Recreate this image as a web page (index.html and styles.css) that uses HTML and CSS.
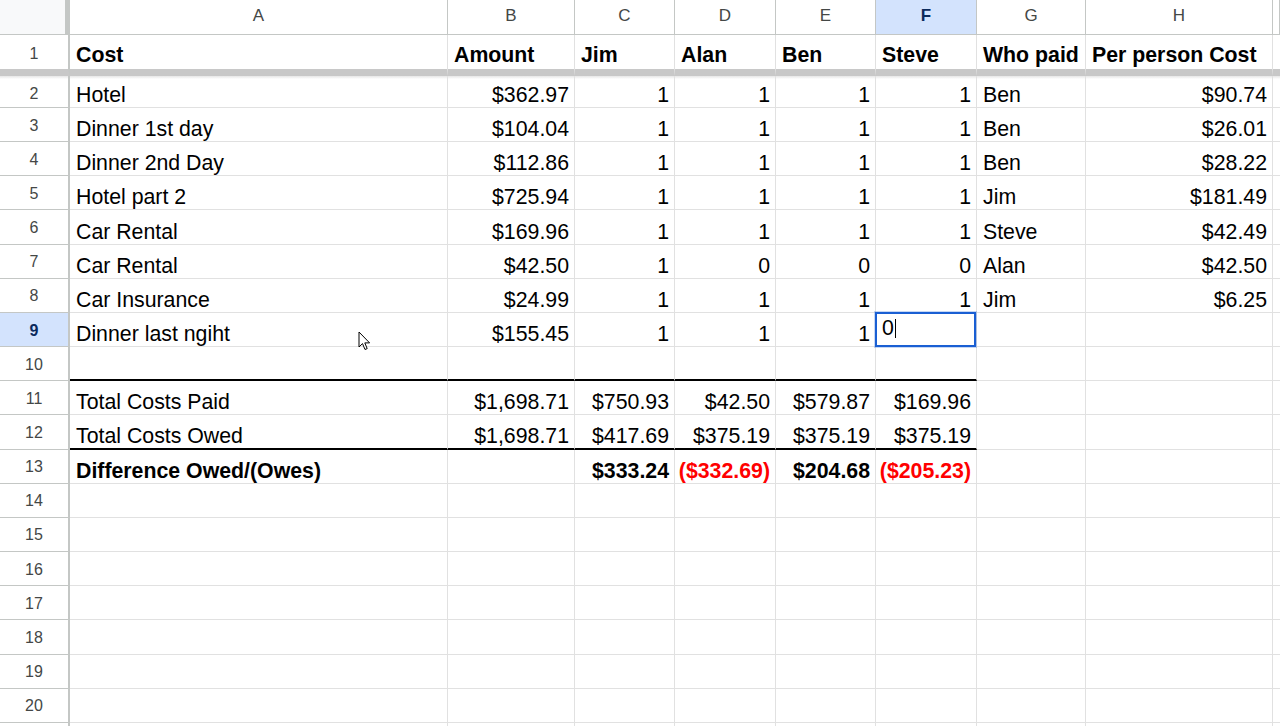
FILE: index.html
```html
<!DOCTYPE html>
<html>
<head>
<meta charset="utf-8">
<link rel="stylesheet" href="styles.css">
</head>
<body>
<div class="sheet">
  <div class="row colhead">
    <div class="corner"></div>
    <div class="ch">A</div><div class="ch">B</div><div class="ch">C</div><div class="ch">D</div><div class="ch">E</div><div class="ch sel">F</div><div class="ch">G</div><div class="ch">H</div><div class="ch"></div>
  </div>
  <div class="row frozen">
    <div class="rh">1</div>
    <div class="c b">Cost</div><div class="c b">Amount</div><div class="c b">Jim</div><div class="c b">Alan</div><div class="c b">Ben</div><div class="c b">Steve</div><div class="c b">Who paid</div><div class="c b">Per person Cost</div><div class="c"></div>
  </div>
  <div class="row first">
    <div class="rh">2</div>
    <div class="c">Hotel</div><div class="c r">$362.97</div><div class="c r">1</div><div class="c r">1</div><div class="c r">1</div><div class="c r">1</div><div class="c">Ben</div><div class="c r">$90.74</div><div class="c"></div>
  </div>
  <div class="row">
    <div class="rh">3</div>
    <div class="c">Dinner 1st day</div><div class="c r">$104.04</div><div class="c r">1</div><div class="c r">1</div><div class="c r">1</div><div class="c r">1</div><div class="c">Ben</div><div class="c r">$26.01</div><div class="c"></div>
  </div>
  <div class="row">
    <div class="rh">4</div>
    <div class="c">Dinner 2nd Day</div><div class="c r">$112.86</div><div class="c r">1</div><div class="c r">1</div><div class="c r">1</div><div class="c r">1</div><div class="c">Ben</div><div class="c r">$28.22</div><div class="c"></div>
  </div>
  <div class="row">
    <div class="rh">5</div>
    <div class="c">Hotel part 2</div><div class="c r">$725.94</div><div class="c r">1</div><div class="c r">1</div><div class="c r">1</div><div class="c r">1</div><div class="c">Jim</div><div class="c r">$181.49</div><div class="c"></div>
  </div>
  <div class="row">
    <div class="rh">6</div>
    <div class="c">Car Rental</div><div class="c r">$169.96</div><div class="c r">1</div><div class="c r">1</div><div class="c r">1</div><div class="c r">1</div><div class="c">Steve</div><div class="c r">$42.49</div><div class="c"></div>
  </div>
  <div class="row">
    <div class="rh">7</div>
    <div class="c">Car Rental</div><div class="c r">$42.50</div><div class="c r">1</div><div class="c r">0</div><div class="c r">0</div><div class="c r">0</div><div class="c">Alan</div><div class="c r">$42.50</div><div class="c"></div>
  </div>
  <div class="row">
    <div class="rh">8</div>
    <div class="c">Car Insurance</div><div class="c r">$24.99</div><div class="c r">1</div><div class="c r">1</div><div class="c r">1</div><div class="c r">1</div><div class="c">Jim</div><div class="c r">$6.25</div><div class="c"></div>
  </div>
  <div class="row">
    <div class="rh sel">9</div>
    <div class="c">Dinner last ngiht</div><div class="c r">$155.45</div><div class="c r">1</div><div class="c r">1</div><div class="c r">1</div><div class="c editing"><span class="edit-text">0</span><span class="caret"></span></div><div class="c"></div><div class="c"></div><div class="c"></div>
  </div>
  <div class="row">
    <div class="rh">10</div>
    <div class="c rule"></div><div class="c rule"></div><div class="c rule"></div><div class="c rule"></div><div class="c rule"></div><div class="c rule"></div><div class="c"></div><div class="c"></div><div class="c"></div>
  </div>
  <div class="row">
    <div class="rh">11</div>
    <div class="c">Total Costs Paid</div><div class="c r">$1,698.71</div><div class="c r">$750.93</div><div class="c r">$42.50</div><div class="c r">$579.87</div><div class="c r">$169.96</div><div class="c"></div><div class="c"></div><div class="c"></div>
  </div>
  <div class="row">
    <div class="rh">12</div>
    <div class="c rule">Total Costs Owed</div><div class="c r rule">$1,698.71</div><div class="c r rule">$417.69</div><div class="c r rule">$375.19</div><div class="c r rule">$375.19</div><div class="c r rule">$375.19</div><div class="c"></div><div class="c"></div><div class="c"></div>
  </div>
  <div class="row">
    <div class="rh">13</div>
    <div class="c b">Difference Owed/(Owes)</div><div class="c"></div><div class="c r b">$333.24</div><div class="c r b neg">($332.69)</div><div class="c r b">$204.68</div><div class="c r b neg">($205.23)</div><div class="c"></div><div class="c"></div><div class="c"></div>
  </div>
  <div class="row"><div class="rh">14</div><div class="c"></div><div class="c"></div><div class="c"></div><div class="c"></div><div class="c"></div><div class="c"></div><div class="c"></div><div class="c"></div><div class="c"></div></div>
  <div class="row"><div class="rh">15</div><div class="c"></div><div class="c"></div><div class="c"></div><div class="c"></div><div class="c"></div><div class="c"></div><div class="c"></div><div class="c"></div><div class="c"></div></div>
  <div class="row"><div class="rh">16</div><div class="c"></div><div class="c"></div><div class="c"></div><div class="c"></div><div class="c"></div><div class="c"></div><div class="c"></div><div class="c"></div><div class="c"></div></div>
  <div class="row"><div class="rh">17</div><div class="c"></div><div class="c"></div><div class="c"></div><div class="c"></div><div class="c"></div><div class="c"></div><div class="c"></div><div class="c"></div><div class="c"></div></div>
  <div class="row"><div class="rh">18</div><div class="c"></div><div class="c"></div><div class="c"></div><div class="c"></div><div class="c"></div><div class="c"></div><div class="c"></div><div class="c"></div><div class="c"></div></div>
  <div class="row"><div class="rh">19</div><div class="c"></div><div class="c"></div><div class="c"></div><div class="c"></div><div class="c"></div><div class="c"></div><div class="c"></div><div class="c"></div><div class="c"></div></div>
  <div class="row"><div class="rh">20</div><div class="c"></div><div class="c"></div><div class="c"></div><div class="c"></div><div class="c"></div><div class="c"></div><div class="c"></div><div class="c"></div><div class="c"></div></div>
  <div class="row tail"><div class="rh"></div><div class="c"></div><div class="c"></div><div class="c"></div><div class="c"></div><div class="c"></div><div class="c"></div><div class="c"></div><div class="c"></div><div class="c"></div></div>
</div>
<svg class="cursor" width="14" height="21" viewBox="0 0 14 21" xmlns="http://www.w3.org/2000/svg">
  <path d="M1 1 L1 16 L4.5 12.6 L7 18.5 L9.2 17.6 L6.8 11.9 L11.6 11.9 Z" fill="#fff" stroke="#000" stroke-width="1" stroke-linejoin="round"/>
</svg>
</body>
</html>
```
FILE: styles.css
```css
* { box-sizing: border-box; }
html, body { margin: 0; padding: 0; background: #fff; }
body {
  width: 1280px;
  height: 726px;
  overflow: hidden;
  position: relative;
  font-family: "Liberation Sans", Arial, sans-serif;
}
.sheet { display: flex; flex-direction: column; }
.row {
  display: grid;
  grid-template-columns: 70px 378px 127px 100px 101px 100px 101px 109px 187px 1fr;
  height: 34.17px;
  flex: none;
}
.colhead { height: 35px; }
.frozen { height: 41px; }
.first { height: 32px; }

.corner {
  background: #f8f9fa;
  border-right: 5px solid #c4c7c5;
  border-bottom: 1px solid #c4c7c5;
}
.ch {
  display: flex;
  align-items: center;
  justify-content: center;
  padding-bottom: 3px;
  font-size: 17px;
  color: #444746;
  background: #fff;
  border-right: 1px solid #c4c7c5;
  border-bottom: 1px solid #c4c7c5;
}
.ch.sel, .rh.sel {
  background: #d3e3fd;
  color: #0b2a5c;
  font-weight: bold;
}
.rh {
  display: flex;
  align-items: center;
  justify-content: center;
  padding-top: 2px;
  font-size: 16px;
  color: #444746;
  background: #fff;
  border-right: 2px solid #c4c7c5;
  border-bottom: 1px solid #c4c7c5;
}
.frozen .rh, .frozen .c {
  border-bottom: 7px solid #c8c8c8;
}
.frozen .c { padding-bottom: 2px; }
.frozen .rh { padding-top: 3px; }
.first .c, .first .rh {
  background: linear-gradient(#e6e6e6, #fff 3px);
}
.first .rh { padding-top: 4px; }
.c {
  display: flex;
  align-items: flex-end;
  padding: 0 5px 0 6px;
  font-size: 21.3px;
  line-height: 24px;
  white-space: nowrap;
  overflow: hidden;
  color: #000;
  border-right: 1px solid #e1e1e1;
  border-bottom: 1px solid #e1e1e1;
}
.c.r { justify-content: flex-end; }
.c.b { font-weight: bold; }
.c.neg { color: #ff0000; }
.c.rule { border-bottom: 2px solid #000; }

.editing {
  position: relative;
  overflow: visible;
  z-index: 2;
  align-items: center;
  padding-top: 0;
  padding-bottom: 3px;
}
.editing::after {
  content: "";
  position: absolute;
  left: -1px;
  top: -1px;
  right: 0;
  bottom: -1px;
  border: 2px solid #1a5fd3;
  box-shadow: 0 0 0 1px rgba(26, 95, 211, 0.25);
}
.edit-text { line-height: 24px; }
.caret {
  display: inline-block;
  width: 1px;
  height: 19px;
  background: #000;
  margin-left: 1px;
}
.cursor {
  position: absolute;
  left: 358px;
  top: 331px;
  z-index: 5;
}
```
